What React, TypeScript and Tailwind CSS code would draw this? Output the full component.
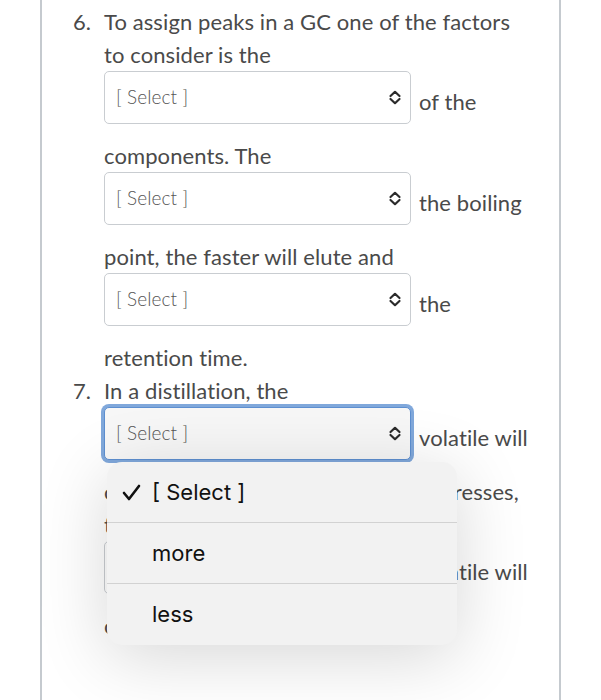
import React from 'react';

const Chevrons: React.FC = () => (
  <svg width="14" height="15" viewBox="0 0 14 15" fill="none" stroke="#2b2b2b" strokeWidth="2.2" strokeLinecap="round" strokeLinejoin="round">
    <polyline points="2.5,6 7,1.8 11.5,6" />
    <polyline points="2.5,9 7,13.2 11.5,9" />
  </svg>
);

const Check: React.FC = () => (
  <svg width="19" height="17" viewBox="0 0 19 17" fill="none" stroke="#111" strokeWidth="2.6" strokeLinecap="round" strokeLinejoin="round">
    <polyline points="2,9 7,15 17,2" />
  </svg>
);

interface SelectRowProps {
  trailing: string;
  focused?: boolean;
}

const SelectRow: React.FC<SelectRowProps> = ({ trailing, focused }) => (
  <div className="flex items-start mb-[15px]">
    <div
      className={
        focused
          ? 'flex items-center justify-between w-[307px] h-[53px] pl-[11px] pr-[8px] bg-[#f7f7f7] border border-[#5d8fd0] rounded-[5px] shadow-[0_0_0_3px_#80a8db]'
          : 'flex items-center justify-between w-[307px] h-[53px] pl-[11px] pr-[8px] bg-white border border-[#c9cdd1] rounded-[5px]'
      }
    >
      <span className="text-[19px] font-light text-[#555]">[ Select ]</span>
      <Chevrons />
    </div>
    <span className="ml-[8px] mt-[14px] leading-[33px]">{trailing}</span>
  </div>
);

const Line: React.FC<{ children: React.ReactNode }> = ({ children }) => (
  <div className="leading-[33px] whitespace-nowrap">{children}</div>
);

const options = ['[ Select ]', 'more', 'less'];

export default function App() {
  return (
    <div className="relative w-[601px] h-[700px] overflow-hidden bg-white">
      <div
        className="ml-[40px] w-[521px] h-[700px] border-l-2 border-r-2 border-[#c5cacf] pl-[31px] pt-[5px] text-[22px] tracking-[0.1px] text-[#4a4a4a]"
        style={{ fontFamily: 'Lato, "Open Sans", sans-serif' }}
      >
        <div className="flex">
          <div className="w-[31px] leading-[33px]">6.</div>
          <div>
            <Line>To assign peaks in a GC one of the factors</Line>
            <Line>to consider is the</Line>
            <SelectRow trailing="of the" />
            <Line>components. The</Line>
            <SelectRow trailing="the boiling" />
            <Line>point, the faster will elute and</Line>
            <SelectRow trailing="the" />
            <Line>retention time.</Line>
          </div>
        </div>
        <div className="flex">
          <div className="w-[31px] leading-[33px]">7.</div>
          <div>
            <Line>In a distillation, the</Line>
            <SelectRow trailing="volatile will" focused />
            <Line>condenses first. As the process progresses,</Line>
            <Line>the</Line>
            <SelectRow trailing="volatile will" />
            <Line>come over later.</Line>
          </div>
        </div>
      </div>

      {/* open picker of question 7 */}
      <div
        className="absolute left-[107px] top-[462px] w-[350px] rounded-[15px] bg-[#f2f2f2] shadow-[0_12px_70px_rgba(0,0,0,0.16)] overflow-hidden text-[22px] text-[#111]"
        style={{ fontFamily: 'Inter, Roboto, sans-serif' }}
      >
        {options.map((opt, i) => (
          <div
            key={opt}
            className={
              i < options.length - 1
                ? 'flex items-center h-[61px] border-b border-[#d2d2d2]'
                : 'flex items-center h-[61px]'
            }
          >
            <span className="flex items-center w-[45px] pl-[15px]">{i === 0 ? <Check /> : null}</span>
            <span>{opt}</span>
          </div>
        ))}
      </div>
    </div>
  );
}
